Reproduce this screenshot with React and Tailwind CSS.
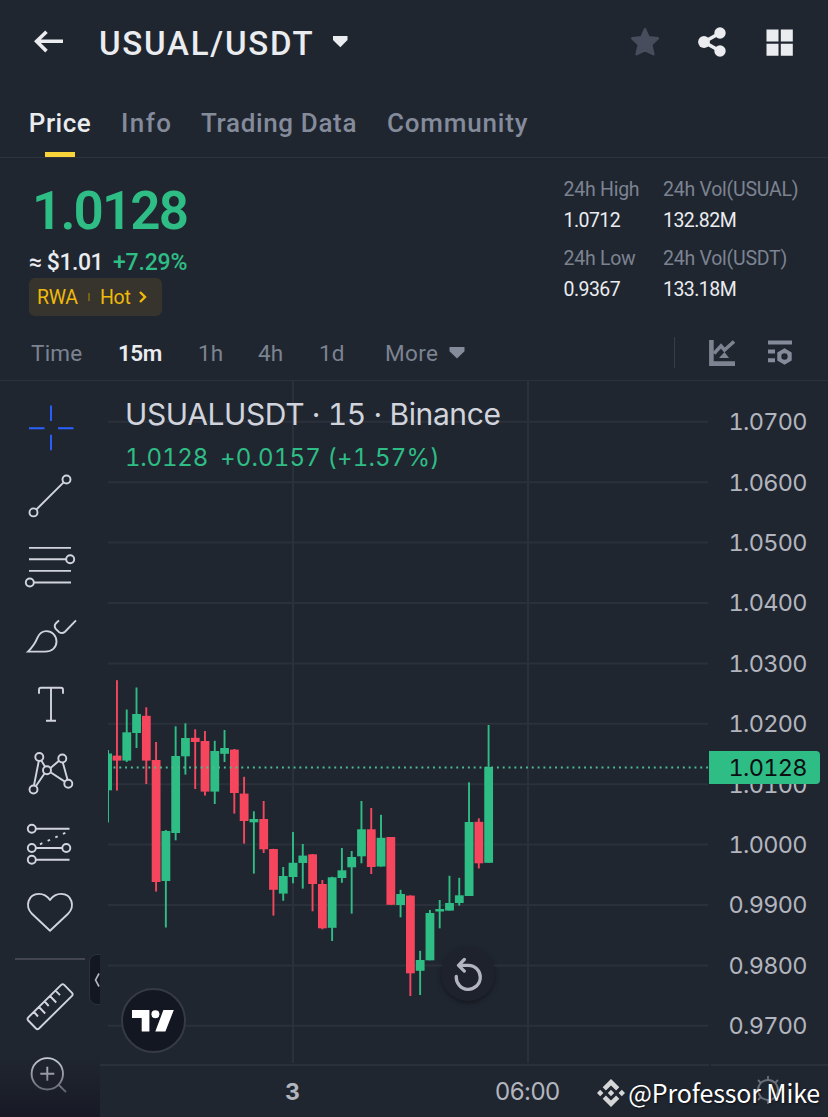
import React from "react";

const UP = "#2ebd85";
const DOWN = "#f6465d";

// [direction, high, body top, body bottom, low] in chart pixels
const CANDLES = [
  ["u", 750, 753.5, 790.3, 822.5],
  ["d", 680.2, 755.6, 760.6, 790.6],
  ["u", 709.5, 732.3, 760.6, 762],
  ["u", 687.5, 714, 733, 748],
  ["d", 707.3, 715.8, 760.6, 784],
  ["d", 742, 760, 882, 891.6],
  ["u", 830, 831, 881, 927.5],
  ["u", 726.3, 756, 833, 840.3],
  ["u", 723.3, 738, 756.3, 774.6],
  ["d", 729.3, 737.8, 742, 789],
  ["d", 731, 741, 791.6, 795.6],
  ["u", 740.8, 751, 791.6, 804],
  ["u", 730, 748, 753.8, 762],
  ["d", 749, 749.6, 793, 813.6],
  ["d", 776.8, 793.6, 821, 843.6],
  ["u", 811.3, 819, 822.3, 873.6],
  ["d", 801, 819, 849.3, 853],
  ["d", 848.8, 849, 889.8, 915.6],
  ["u", 867, 876, 893.6, 900.8],
  ["u", 832, 862.8, 877, 883.3],
  ["u", 844, 855.6, 863, 888.6],
  ["d", 854, 854.3, 884, 911.3],
  ["d", 880, 884, 928.3, 929.3],
  ["u", 876.8, 877.3, 927.8, 941],
  ["u", 848, 870.3, 878, 882.8],
  ["u", 851, 857, 867.3, 913.6],
  ["u", 801, 829.3, 856.3, 863.3],
  ["d", 808, 829.3, 867, 874],
  ["u", 814.8, 837.8, 866.5, 866.6],
  ["d", 837, 837, 904.8, 904.8],
  ["u", 889.8, 894, 905, 917.3],
  ["d", 895.3, 895.6, 973.3, 996],
  ["u", 950.8, 960, 970.8, 995],
  ["u", 910, 913, 960.3, 960.3],
  ["u", 900, 909, 911.5, 928.3],
  ["u", 875.8, 903, 910.6, 910.6],
  ["u", 877.8, 895.3, 903, 905.6],
  ["u", 782.3, 822, 896, 896],
  ["d", 818.3, 821.8, 863.3, 868.5],
  ["u", 725, 767, 862.8, 862.8],
];

const PRICES = ["1.0700", "1.0600", "1.0500", "1.0400", "1.0300", "1.0200", "1.0100", "1.0000", "0.9900", "0.9800", "0.9700"];

function Header() {
  return (
    <header className="flex h-[84px] shrink-0 items-center pl-[34px] pr-[35px]">
      <svg className="h-[24px] w-[29px]" viewBox="0 0 29 24" fill="none" stroke="#eaecef" strokeWidth="3.6">
        <path d="M12.5 1.7 2.6 11.3l9.9 9.8M3 11.3h26" />
      </svg>
      <h1 className="ml-[36px] w-[234px] whitespace-nowrap pt-[4px] text-[33px] leading-[40px] font-medium tracking-[1.75px] text-[#eaecef]">USUAL/USDT</h1>
      <svg className="mb-[1px] -ml-px h-[12px] w-[16px]" viewBox="0 0 16 12" fill="#eaecef">
        <path d="M1 0h14.5v4L8.3 11.3 1 4z" />
      </svg>
      <div className="ml-auto flex items-center">
        <svg className="h-[30px] w-[30px]" viewBox="0 0 30 30">
          <path d="M15 2.2 18.6 10.2 27.8 11.3 21.2 17.6 23.4 27.2 15 23.2 6.6 27.2 8.8 17.6 2.2 11.3 11.4 10.2z" fill="#474d5c" stroke="#474d5c" strokeWidth="2.5" strokeLinejoin="round" />
        </svg>
        <svg className="ml-[38px] h-[30px] w-[28px]" viewBox="0 0 28 30" fill="#eaecef">
          <path d="M22 6 6 15l16 9" fill="none" stroke="#eaecef" strokeWidth="3.6" />
          <circle cx="6" cy="15" r="5.9" />
          <circle cx="22" cy="6" r="5.7" />
          <circle cx="22" cy="24" r="5.7" />
        </svg>
        <svg className="ml-[40px] h-[27px] w-[27px]" viewBox="0 0 27 27" fill="#eaecef">
          <path d="M.5.5h12v12H.5zM14.8.5h12v12h-12zM.5 14.7h12v12H.5zM14.8 14.7h12v12h-12z" />
        </svg>
      </div>
    </header>
  );
}

function Tabs() {
  return (
    <nav className="flex h-[74px] shrink-0 items-stretch whitespace-nowrap border-b border-[#2d333d] pl-[29px] pt-[21px] text-[26px] leading-[36px] font-medium text-[#848b9b]">
      <div className="flex w-[62px] flex-col items-center text-[#eaecef]">
        <span className="tracking-[0.5px]">Price</span>
        <span className="mt-auto h-[5px] w-[30px] bg-[#f8d33a]" />
      </div>
      <span className="ml-[30px] w-[80px] tracking-[1.4px]">Info</span>
      <span className="w-[186px] tracking-[0.65px]">Trading Data</span>
      <span className="tracking-[0.8px]">Community</span>
    </nav>
  );
}

function Stat({ label, value }) {
  return (
    <div>
      <div className="h-[31px] text-[19.5px] leading-[26px] tracking-[-0.25px] text-[#7c8391]">{label}</div>
      <div className="text-[19.5px] leading-[26px] tracking-[-0.55px] text-[#eaecef]">{value}</div>
    </div>
  );
}

function Summary() {
  return (
    <section className="flex h-[168px] shrink-0 justify-between whitespace-nowrap pl-[29px] pr-[28px]">
      <div className="pt-[23px]">
        <div className="pl-[3px] text-[53px] leading-[60px] font-semibold tracking-[-1.9px] text-[#2ebd85]">1.0128</div>
        <div className="mt-[9px] flex h-[26px] items-center text-[23px] leading-[26px] font-medium">
          <span className="w-[84px] tracking-[-0.5px] text-[#eaecef]">≈ $1.01</span>
          <span className="tracking-[-0.2px] text-[#2ebd85]">+7.29%</span>
        </div>
        <div className="mt-[2px] flex h-[38px] w-[133px] items-center rounded-[6px] bg-[#36342c] pl-[8px] text-[19.5px] text-[#f0b90b]">
          <span className="w-[51px] pt-[2px] tracking-[-0.3px]">RWA</span>
          <span className="h-[8px] w-[2px] bg-[#75601c]" />
          <span className="ml-[10px] w-[39px] pt-[2px] tracking-[-0.3px]">Hot</span>
          <svg className="h-[12px] w-[8px]" viewBox="0 0 8 12" fill="none" stroke="#f0b90b" strokeWidth="2.4">
            <path d="m1 1 5 5-5 5" />
          </svg>
        </div>
      </div>
      <div className="grid h-[140px] w-[236.5px] grid-cols-[99.5px_137px] grid-rows-[69.5px_69.5px] pt-[18.5px]">
        <Stat label="24h High" value="1.0712" />
        <Stat label="24h Vol(USUAL)" value="132.82M" />
        <Stat label="24h Low" value="0.9367" />
        <Stat label="24h Vol(USDT)" value="133.18M" />
      </div>
    </section>
  );
}

function Intervals() {
  return (
    <div className="flex h-[54px] shrink-0 items-center whitespace-nowrap pl-[31px] pr-[36px] text-[22.5px] text-[#7c8391]">
      <div className="flex pt-[2px]">
        <span className="w-[87px] tracking-[0.2px]">Time</span>
        <span className="w-[80px] font-semibold tracking-[-0.5px] text-[#eaecef]">15m</span>
        <span className="w-[60px]">1h</span>
        <span className="w-[61px]">4h</span>
        <span className="w-[66px]">1d</span>
        <span className="w-[64px] tracking-[0.4px]">More</span>
      </div>
      <svg className="h-[12px] w-[16px]" viewBox="0 0 16 12" fill="#848b9b">
        <path d="M.5 0h15v4.2L8 11.5.5 4.2z" />
      </svg>
      <span className="mb-px ml-auto h-[31px] w-px bg-[#373d49]" />
      <svg className="mb-px ml-[34px] h-[26px] w-[26px]" viewBox="0 0 26 26" fill="none" stroke="#7c8391">
        <path d="M2.4 0v23.6H26" strokeWidth="4.6" />
        <path d="M5 13.5 12 6l3.5 4L25 1.5" strokeWidth="3.6" />
        <path d="m10 18 5.5-6 4.5 6z" fill="#7c8391" stroke="none" />
      </svg>
      <svg className="mb-px ml-[33px] h-[25px] w-[24px]" viewBox="0 0 24 25" fill="#848b9b">
        <path d="M0 .6h24v4H0zM0 9.5h7v4H0zM0 18.3h7v4H0z" />
        <path fillRule="evenodd" d="m16.5 8.3 7.2 4.1v8.2l-7.2 4.1-7.2-4.1v-8.2zm0 5a3.2 3.2 0 1 0 0 6.4 3.2 3.2 0 0 0 0-6.4z" />
      </svg>
    </div>
  );
}

function Tool({ top, children, color = "#d1d4dc" }) {
  return (
    <svg className="h-[69.3px] w-[100px] shrink-0" viewBox={`0 ${top} 100 69.3`} fill="none" stroke={color} strokeWidth="1.9">
      {children}
    </svg>
  );
}

function Toolbar() {
  return (
    <aside className="relative flex w-[100px] shrink-0 flex-col overflow-hidden pt-[12px]">
      <Tool top={393.5} color="#2962ff">
        <path d="M51 406v15.5M51 435.3v15.5M29 428.7h15.5M58 428.7h15.5" />
      </Tool>
      <Tool top={462.8}>
        <circle cx="33.5" cy="513.2" r="4" />
        <circle cx="66.5" cy="480.3" r="4" />
        <path d="m36.4 510.3 27.2-27.2" />
      </Tool>
      <Tool top={532.1}>
        <path d="M29 548h42M29 559.4h37M29 571h42M34 582.6h37" />
        <circle cx="70.2" cy="559.4" r="4" />
        <circle cx="29.8" cy="582.6" r="4" />
      </Tool>
      <Tool top={601.4}>
        <path d="M28 652C33 647 35.5 643 37.5 638 39.5 633.5 42.5 631.5 46.5 631.5 52 631.5 56.5 636 56.5 642 56.5 648 52 652 45 652z" />
        <path d="m59 620.8-3 2.8q-2.6 3 0 6l3.2 3q3 2 5.8-.5L76 620.8" />
      </Tool>
      <Tool top={670.7}>
        <path d="M39 694.5v-4q0-2 2-2h20q2 0 2 2v4M51 688.5v33M46 721.4h10" />
      </Tool>
      <Tool top={740}>
        <path d="m41.3 761.5 3.8 6.2M50.5 769l8.5-7.2M50.5 773.2l14.3 9.4M62.8 763.5l4.7 17M34 786.3l4.8-24.3M36 787l8.5-12.5" />
        <circle cx="39.3" cy="758" r="4" />
        <circle cx="62.3" cy="759.5" r="4" />
        <circle cx="47" cy="771.2" r="4" />
        <circle cx="68.3" cy="784.7" r="4" />
        <circle cx="33.5" cy="790.5" r="4" />
      </Tool>
      <Tool top={809.3}>
        <circle cx="31.8" cy="829" r="4" />
        <circle cx="31.8" cy="848.3" r="4" />
        <circle cx="66.3" cy="848.3" r="4" />
        <circle cx="31.8" cy="860" r="4" />
        <path d="M36 829h33.5M36 848.3h26.3M36 860h33.5" />
        <path d="m40 844.6 26-11.8" strokeDasharray="2.6 5.8" />
      </Tool>
      <Tool top={878.6}>
        <path d="M50 931.3 32.2 914.6C24.5 907 28 894.5 39 894.5c5 0 8 2 11 6 3-4 6-6 11-6 11 0 14.5 12.5 6.8 20.1z" strokeLinejoin="round" />
      </Tool>
      <div className="mt-[11px] ml-[15px] h-[2px] w-[70px] shrink-0 bg-[#434651]" />
      <div className="h-[12px] shrink-0" />
      <Tool top={972.5}>
        <path d="m28.2 1018 33-32.6q1.5-1.3 3 0l7.8 8q1.3 1.5 0 3l-33 32.6q-1.5 1.3-3 0l-7.8-8q-1.3-1.5 0-3zM34 1012.5l4 4.5M39 1007.5l6.2 6.5M44.7 1002l4 4.5M50 996.5l6.2 6.5M55.5 991.2l4.5 4.5" strokeLinejoin="round" />
      </Tool>
      <Tool top={1041.8}>
        <circle cx="47.3" cy="1073.6" r="15.7" />
        <path d="M40.3 1073.6h14M47.3 1066.6v14M58.5 1084.5l7.5 7.5" />
      </Tool>
      <div className="absolute bottom-0 left-0 h-[62px] w-[100px] bg-linear-to-b from-[#171a26]/0 to-[#171a26]" />
      <div className="absolute top-[573px] left-[89px] flex h-[51px] w-[22px] items-center rounded-[8px] border border-[#2c313c] bg-[#131722] pl-[4px]">
        <svg className="h-[14px] w-[6px]" viewBox="0 0 6 14" fill="none" stroke="#b2b5be" strokeWidth="1.6">
          <path d="M5 .5 1.5 7 5 13.5" />
        </svg>
      </div>
    </aside>
  );
}

function Plot() {
  return (
    <svg className="block h-[683px] w-[608px]" viewBox="100 381 608 683">
      <g stroke="#2b313b" strokeWidth="2">
        {PRICES.map((p, i) => (
          <path key={p} d={`M108 ${421.8 + i * 60.4}H708`} />
        ))}
        <path d="M293 381V1063M528 381V1063" />
      </g>
      {CANDLES.map(([dir, high, top, bottom, low], i) => {
        const x = i === 0 ? 108 : 117 + (i - 1) * 9.78;
        const color = dir === "u" ? UP : DOWN;
        return (
          <g key={i} fill={color}>
            <rect x={i === 0 ? 108 : x - 1} y={high} width={i === 0 ? 1 : 1.9} height={low - high} />
            <rect x={i === 0 ? 108 : x - 4.4} y={top} width={i === 0 ? 4 : 8.8} height={Math.max(bottom - top, 2)} />
          </g>
        );
      })}
      <path d="M113.5 767.5H708" stroke="#4bbd90" strokeWidth="1.8" strokeDasharray="1.9 3.91" />
    </svg>
  );
}

function Chart() {
  return (
    <div className="relative flex w-[609px] shrink-0 flex-col">
      <Plot />
      <div className="flex h-[53px] items-center border-t-2 border-[#2b313b] pl-[185px] pt-px text-[24px] text-[#b2b5be]">
        <span className="w-[210px] text-[23px] font-bold">3</span>
        <span className="tracking-[-0.5px]">06:00</span>
      </div>
      <div className="absolute top-[13px] left-[25px] whitespace-nowrap tabular-nums">
        <div className="text-[30px] leading-[40px] tracking-[-0.39px] text-[#d1d4dc]">USUALUSDT · 15 · Binance</div>
        <div className="mt-[6px] flex text-[24px] leading-[36px] tracking-[0.15px] text-[#2ebd85]">
          <span className="w-[95px] tracking-[-0.2px]">1.0128</span>
          <span>+0.0157 (+1.57%)</span>
        </div>
      </div>
      <div className="absolute top-[607px] left-[20.5px] flex size-[65px] items-center justify-center rounded-full border-2 border-[#363a45] bg-[#131722]">
        <svg className="h-[22px] w-[42px]" viewBox="0 0 42 22" fill="#fff">
          <path d="M0 0h17.4v21.5H9.7V8H0zM31.4 0h10.4l-8.4 21.5H23.3z" />
          <circle cx="23.4" cy="4.2" r="4" />
        </svg>
      </div>
      <div className="absolute top-[566px] left-[341px] flex size-[54px] items-center justify-center rounded-full bg-[#1e222d] shadow-[0_2px_5px_rgba(0,0,0,0.4)]">
        <svg className="h-[34px] w-[30px]" viewBox="453 957 30 34" fill="none" stroke="#b2b5be" strokeWidth="3.3" strokeLinecap="round" strokeLinejoin="round">
          <path d="M464.3 959.5 458.5 965.3l5.8 5.8M459 965.3h9.3a12 12 0 1 1-12 11.2" />
        </svg>
      </div>
    </div>
  );
}

function PriceAxis() {
  return (
    <div className="relative flex flex-1 flex-col tabular-nums">
      <div className="flex h-[683px] flex-col pt-[11.2px] pl-[19.5px] text-[23.5px] tracking-[-0.7px] text-[#b2b5be]">
        {PRICES.map((p) => (
          <span key={p} className="h-[60.4px] shrink-0 leading-[60.4px]">{p}</span>
        ))}
      </div>
      <div className="ml-[2px] border-t-2 border-[#2b313b]" />
      <div className="absolute top-[370px] left-0 flex h-[33px] w-[111px] items-center rounded-r-[4px] bg-[#2ebd85] pl-[19.5px] text-[23.5px] tracking-[-0.7px] text-[#0c0e12]">1.0128</div>
      <svg className="absolute bottom-[12px] left-[44px] h-[30px] w-[30px]" viewBox="-15 -15 30 30" fill="none" stroke="#6c707c" strokeWidth="1.8">
        <circle r="10" />
        <path d="M0-10v-4M0 10v4M10 0h4M-10 0h-4M7-7l3-3M-7-7l-3-3M7 7l3 3M-7 7l-3 3" />
      </svg>
    </div>
  );
}

function Signature() {
  return (
    <div className="absolute right-[8px] bottom-[8px] flex items-center whitespace-nowrap font-['Noto_Sans_CJK_SC','Noto_Sans',sans-serif] text-[25px] leading-[34px] tracking-[-0.15px] text-white [text-shadow:1px_1px_2px_rgba(0,0,0,0.6)]">
      <svg className="mt-[2px] mr-[3px] h-[28px] w-[28px]" viewBox="0 0 28 28" fill="#d5d6d8">
        <path d="m14 0 8.3 8.3-3.2 3.2L14 6.4l-5.1 5.1-3.2-3.2zM14 28l8.3-8.3-3.2-3.2L14 21.6l-5.1-5.1-3.2 3.2zM14 10.8l3.2 3.2-3.2 3.2-3.2-3.2zM3.2 10.8 6.4 14l-3.2 3.2L0 14zM24.8 10.8 28 14l-3.2 3.2-3.2-3.2z" />
      </svg>
      <span>@Professor Mike</span>
    </div>
  );
}

export default function App() {
  return (
    <div className="relative flex h-[1117px] w-[828px] flex-col overflow-hidden bg-[#202630] font-['Roboto','Liberation_Sans',sans-serif]">
      <Header />
      <Tabs />
      <Summary />
      <Intervals />
      <main className="flex h-[737px] shrink-0 border-t border-[#2b313b] font-['Inter','Liberation_Sans',sans-serif]">
        <Toolbar />
        <Chart />
        <PriceAxis />
      </main>
      <Signature />
    </div>
  );
}
